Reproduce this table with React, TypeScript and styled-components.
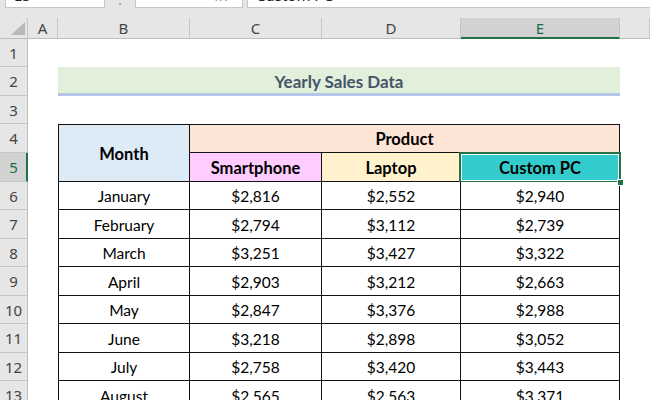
import React from "react";
import styled, { createGlobalStyle, css } from "styled-components";

const GlobalStyle = createGlobalStyle`
  html, body {
    margin: 0;
    padding: 0;
    width: 650px;
    height: 400px;
    overflow: hidden;
    background: #ffffff;
  }
  body {
    font-family: Lato, "Liberation Sans", sans-serif;
  }
  * { box-sizing: border-box; }
`;

const rowHeights = [28, 29, 28, 29, 29, 28, 29, 28, 29, 28, 29, 28, 29];

const Window = styled.div`
  width: 650px;
  height: 400px;
  overflow: hidden;
  display: flex;
  flex-direction: column;
`;

const FormulaBar = styled.div`
  height: 18px;
  flex: none;
  background: #e6e6e6;
  display: flex;
  align-items: flex-end;
  padding: 0 0 10px 5px;
  overflow: hidden;
`;

const BarBox = styled.div<{ $w: string; $ml?: number }>`
  flex: ${(p) => (p.$w === "auto" ? "1" : "none")};
  width: ${(p) => (p.$w === "auto" ? "auto" : p.$w)};
  margin-left: ${(p) => p.$ml ?? 0}px;
  height: 26px;
  background: #ffffff;
  border: 1px solid #c6c6c6;
  border-right: ${(p) => (p.$w === "auto" ? "none" : "1px solid #c6c6c6")};
  display: flex;
  align-items: center;
  padding-left: 8px;
  font-family: "Noto Sans", "Liberation Sans", sans-serif;
  font-size: 15px;
  color: #222;
  gap: 22px;
`;

const FaintIcon = styled.span`
  color: #9a9a9a;
  font-size: 15px;
`;

const Dots = styled.div`
  width: 30px;
  flex: none;
  text-align: center;
  color: #9a9a9a;
  font-size: 14px;
  line-height: 18px;
`;

const Sheet = styled.div`
  flex: none;
  display: grid;
  grid-template-columns: 28px 30px 132px 132px 139px 159px 1fr;
  grid-template-rows: 21px ${rowHeights.map((h) => `${h}px`).join(" ")};
`;

const headerText = css`
  font-family: "Noto Sans", "Liberation Sans", sans-serif;
  font-size: 15px;
  display: flex;
  align-items: center;
  justify-content: center;
`;

const Corner = styled.div`
  grid-row: 1;
  grid-column: 1;
  background: #e6e6e6;
  border-right: 1px solid #c6c6c6;
  border-bottom: 1px solid #bdbdbd;
  display: flex;
  align-items: flex-end;
  justify-content: flex-end;
  padding: 0 2px 3px 0;
`;

const ColHeader = styled.div<{ $col: number; $selected?: boolean }>`
  ${headerText};
  grid-row: 1;
  grid-column: ${(p) => p.$col};
  background: ${(p) => (p.$selected ? "#d2d2d2" : "#e6e6e6")};
  color: ${(p) => (p.$selected ? "#1e6b47" : "#444444")};
  border-right: 1px solid #c6c6c6;
  border-bottom: ${(p) => (p.$selected ? "2px solid #217346" : "1px solid #bdbdbd")};
  padding-top: ${(p) => (p.$selected ? "1px" : "0")};
`;

const RowHeader = styled.div<{ $row: number; $selected?: boolean }>`
  ${headerText};
  grid-column: 1;
  grid-row: ${(p) => p.$row + 1};
  background: ${(p) => (p.$selected ? "#d2d2d2" : "#e6e6e6")};
  color: ${(p) => (p.$selected ? "#1e6b47" : "#444444")};
  border-bottom: 1px solid #c6c6c6;
  border-right: ${(p) => (p.$selected ? "2px solid #217346" : "1px solid #bdbdbd")};
  padding-left: ${(p) => (p.$selected ? "1px" : "0")};
`;

const Banner = styled.div`
  grid-row: 3;
  grid-column: 3 / 7;
  background: #e2efda;
  border-bottom: 3px solid #b4c6e7;
  display: flex;
  align-items: center;
  justify-content: center;
  font-weight: 700;
  font-size: 17px;
  color: #44546a;
  padding-top: 2px;
`;

type CellProps = {
  $row: number;
  $col: number;
  $rowSpan?: number;
  $colSpan?: number;
  $bg?: string;
  $bold?: boolean;
  $top?: boolean;
  $left?: boolean;
};

const Cell = styled.div<CellProps>`
  position: relative;
  grid-row: ${(p) => p.$row + 1} / span ${(p) => p.$rowSpan ?? 1};
  grid-column: ${(p) => p.$col} / span ${(p) => p.$colSpan ?? 1};
  background: ${(p) => p.$bg ?? "#ffffff"};
  border-right: 1px solid #111;
  border-bottom: 1px solid #111;
  border-top: ${(p) => (p.$top ? "1px solid #111" : "none")};
  border-left: ${(p) => (p.$left ? "1px solid #111" : "none")};
  display: flex;
  align-items: center;
  justify-content: center;
  font-size: ${(p) => (p.$bold ? "16.5px" : "15.5px")};
  font-weight: ${(p) => (p.$bold ? 700 : 400)};
  color: #000;
  padding-top: 1px;
`;

const SelectedCell = styled(Cell)`
  &::after {
    content: "";
    position: absolute;
    left: -2px;
    top: -1px;
    right: -2px;
    bottom: -2px;
    border: 2px solid #217346;
    box-shadow: inset 0 0 0 1px #ffffff;
    pointer-events: none;
  }
`;

const FillHandle = styled.span`
  position: absolute;
  right: -5px;
  bottom: -5px;
  width: 7px;
  height: 7px;
  background: #217346;
  border: 1px solid #ffffff;
  z-index: 2;
`;

const data: [string, string, string, string][] = [
  ["January", "$2,816", "$2,552", "$2,940"],
  ["February", "$2,794", "$3,112", "$2,739"],
  ["March", "$3,251", "$3,427", "$3,322"],
  ["April", "$2,903", "$3,212", "$2,663"],
  ["May", "$2,847", "$3,376", "$2,988"],
  ["June", "$3,218", "$2,898", "$3,052"],
  ["July", "$2,758", "$3,420", "$3,443"],
  ["August", "$2,565", "$2,563", "$3,371"],
];

const columns = ["A", "B", "C", "D", "E", ""];

export default function App() {
  return (
    <Window>
      <GlobalStyle />
      <FormulaBar>
        <BarBox $w="100px">E5</BarBox>
        <Dots>⋮</Dots>
        <BarBox $w="108px">
          <FaintIcon>✕</FaintIcon>
          <FaintIcon>✓</FaintIcon>
          <FaintIcon>fx</FaintIcon>
        </BarBox>
        <BarBox $w="auto" $ml={4}>Custom PC</BarBox>
      </FormulaBar>
      <Sheet>
        <Corner>
          <svg width="14" height="13" viewBox="0 0 14 13">
            <polygon points="14,0 14,13 0,13" fill="#b8b8b8" />
          </svg>
        </Corner>
        {columns.map((c, i) => (
          <ColHeader key={i} $col={i + 2} $selected={c === "E"}>
            {c}
          </ColHeader>
        ))}
        {rowHeights.map((_, i) => (
          <RowHeader key={i} $row={i + 1} $selected={i + 1 === 5}>
            {i + 1}
          </RowHeader>
        ))}

        <Banner>Yearly Sales Data</Banner>

        <Cell $row={4} $col={3} $rowSpan={2} $bg="#ddebf7" $bold $top $left>
          Month
        </Cell>
        <Cell $row={4} $col={4} $colSpan={3} $bg="#fce4d6" $bold $top>
          Product
        </Cell>
        <Cell $row={5} $col={4} $bg="#ffccff" $bold>
          Smartphone
        </Cell>
        <Cell $row={5} $col={5} $bg="#fff2cc" $bold>
          Laptop
        </Cell>
        <SelectedCell $row={5} $col={6} $bg="#33cccc" $bold>
          Custom PC
          <FillHandle />
        </SelectedCell>

        {data.map((r, i) => (
          <React.Fragment key={r[0]}>
            <Cell $row={6 + i} $col={3} $left>
              {r[0]}
            </Cell>
            <Cell $row={6 + i} $col={4}>
              {r[1]}
            </Cell>
            <Cell $row={6 + i} $col={5}>
              {r[2]}
            </Cell>
            <Cell $row={6 + i} $col={6}>
              {r[3]}
            </Cell>
          </React.Fragment>
        ))}
      </Sheet>
    </Window>
  );
}
